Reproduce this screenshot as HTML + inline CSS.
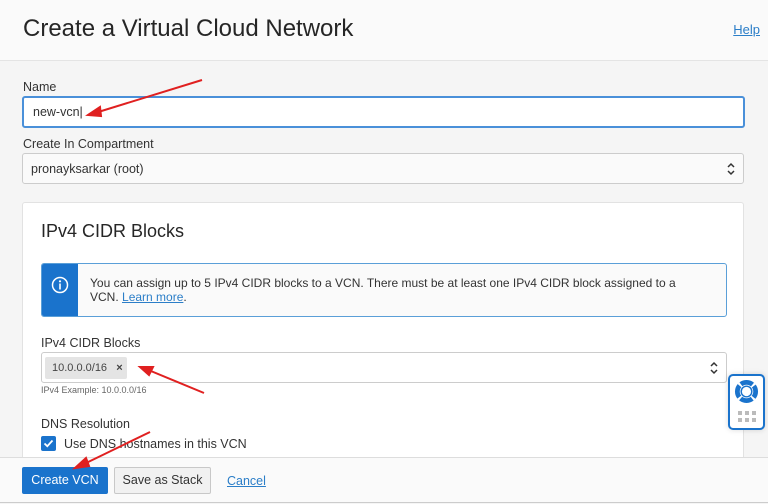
<!DOCTYPE html>
<html><head><style>
*{box-sizing:border-box;margin:0;padding:0}
body{width:768px;height:504px;overflow:hidden;background:#f5f5f5;font-family:"Liberation Sans",Arial,sans-serif;color:#333;position:relative}
.hdr{position:absolute;left:0;top:0;width:768px;height:61px;background:#fafafa;border-bottom:1px solid #e4e4e4}
.hdr h1{position:absolute;left:23px;top:15px;font-weight:normal;font-size:24px;color:#262626}
.help{position:absolute;right:8px;top:22px;font-size:13px;color:#2b7ec8;text-decoration:underline}
.lbl{position:absolute;font-size:12.5px;color:#333}
.inp{position:absolute;border:1px solid #ccc;border-radius:3px;background:#fff;font-size:12.5px}
.panel{position:absolute;left:22px;top:202px;width:722px;height:260px;background:#fff;border:1px solid #e2e2e2;border-radius:3px}
.foot{position:absolute;left:0;top:457px;width:768px;height:46px;background:#fafafa;border-top:1px solid #ddd;border-bottom:1px solid #ccc}
.chev{position:absolute;right:7px;top:7px;width:10px;height:16px}
</style></head><body>
<div class="hdr"><h1>Create a Virtual Cloud Network</h1><span class="help">Help</span></div>
<div class="lbl" style="left:23px;top:80px">Name</div>
<div class="inp" style="left:22px;top:96px;width:723px;height:32px;border:2px solid #4a90d9;padding:7px 9px">new-vcn|</div>
<div class="lbl" style="left:23px;top:137px">Create In Compartment</div>
<div class="inp" style="left:22px;top:153px;width:722px;height:31px;background:#fafafa;padding:8px 8px">pronayksarkar (root)
<svg class="chev" viewBox="0 0 10 16"><path d="M2 6L5 3L8 6M2 10L5 13L8 10" fill="none" stroke="#333" stroke-width="1.5"/></svg></div>
<div class="panel">
<div style="position:absolute;left:18px;top:18px;font-size:18px;color:#262626">IPv4 CIDR Blocks</div>
<div style="position:absolute;left:18px;top:60px;width:686px;height:54px;border:1px solid #5a9fd8;border-radius:3px;background:#fafafa;overflow:hidden">
<div style="position:absolute;left:0;top:0;width:36px;height:54px;background:#1a73cc"></div>
<svg style="position:absolute;left:9px;top:12px" width="18" height="18" viewBox="0 0 18 18"><circle cx="9" cy="9" r="7.5" fill="none" stroke="#fff" stroke-width="1.5"/><circle cx="9" cy="5.3" r="1.1" fill="#fff"/><rect x="8.2" y="7.5" width="1.6" height="6" fill="#fff"/></svg>
<div style="position:absolute;left:48px;top:12px;font-size:12px;line-height:14px;color:#333;white-space:nowrap">You can assign up to 5 IPv4 CIDR blocks to a VCN. There must be at least one IPv4 CIDR block assigned to a<br>VCN. <span style="color:#2b7ec8;text-decoration:underline">Learn more</span>.</div>
</div>
<div class="lbl" style="left:18px;top:133px">IPv4 CIDR Blocks</div>
<div class="inp" style="left:18px;top:149px;width:686px;height:31px">
<div style="position:absolute;left:3px;top:4px;width:82px;height:22px;background:#e4e4e4;border-radius:2px;font-size:11px;padding:5px 7px;color:#444;white-space:nowrap">10.0.0.0/16 &nbsp;&nbsp;<b>×</b></div>
<svg class="chev" viewBox="0 0 10 16"><path d="M2 6L5 3L8 6M2 10L5 13L8 10" fill="none" stroke="#333" stroke-width="1.5"/></svg></div>
<div style="position:absolute;left:18px;top:182px;font-size:9px;color:#666">IPv4 Example: 10.0.0.0/16</div>
<div class="lbl" style="left:18px;top:214px">DNS Resolution</div>
<div style="position:absolute;left:18px;top:233px;width:15px;height:15px;background:#1a73cc;border-radius:2px"><svg width="15" height="15" viewBox="0 0 15 15"><path d="M3.5 7.5L6.3 10.2L11.5 4.5" fill="none" stroke="#fff" stroke-width="1.8"/></svg></div>
<div class="lbl" style="left:41px;top:234px">Use DNS hostnames in this VCN</div>
</div>
<div style="position:absolute;left:728px;top:374px;width:37px;height:56px;border:2px solid #1a73cc;border-radius:5px;background:#fff;box-shadow:0 0 6px rgba(0,0,0,.15)">
<svg style="position:absolute;left:4px;top:3px" width="25" height="25" viewBox="0 0 26 26"><circle cx="13" cy="13" r="9.5" fill="none" stroke="#1a73cc" stroke-width="5"/><circle cx="13" cy="13" r="9.5" fill="none" stroke="#fff" stroke-width="5.2" stroke-dasharray="2 12.9" stroke-dashoffset="-6.5"/><circle cx="13" cy="13" r="5.5" fill="none" stroke="#1a73cc" stroke-width="1.5"/></svg>
<div style="position:absolute;left:8px;top:35px;width:20px;display:flex;flex-wrap:wrap;gap:3px">
<i style="width:4px;height:4px;background:#bbb"></i><i style="width:4px;height:4px;background:#bbb"></i><i style="width:4px;height:4px;background:#bbb"></i><i style="width:4px;height:4px;background:#bbb"></i><i style="width:4px;height:4px;background:#bbb"></i><i style="width:4px;height:4px;background:#bbb"></i></div>
</div>
<div class="foot">
<div style="position:absolute;left:22px;top:9px;width:86px;height:27px;background:#1a73cc;border-radius:2px;color:#fff;font-size:12.5px;text-align:center;line-height:27px">Create VCN</div>
<div style="position:absolute;left:114px;top:9px;width:97px;height:27px;background:#f1f1f1;border:1px solid #c8c8c8;border-radius:2px;color:#333;font-size:12.5px;text-align:center;line-height:25px">Save as Stack</div>
<div style="position:absolute;left:227px;top:16px;font-size:12.5px;color:#2b7ec8;text-decoration:underline">Cancel</div>
</div>
<svg style="position:absolute;left:0;top:0" width="768" height="504" viewBox="0 0 768 504">
<g stroke="#e02020" stroke-width="2" fill="#e02020">
<line x1="202" y1="80" x2="95" y2="113"/><path d="M88 115L100 107L101 116Z"/>
<line x1="204" y1="393" x2="146" y2="369"/><path d="M140 367L153 367L149 375Z"/>
<line x1="150" y1="432" x2="82" y2="465"/><path d="M75 468L86 458L89 466Z"/>
</g></svg>
</body></html>
